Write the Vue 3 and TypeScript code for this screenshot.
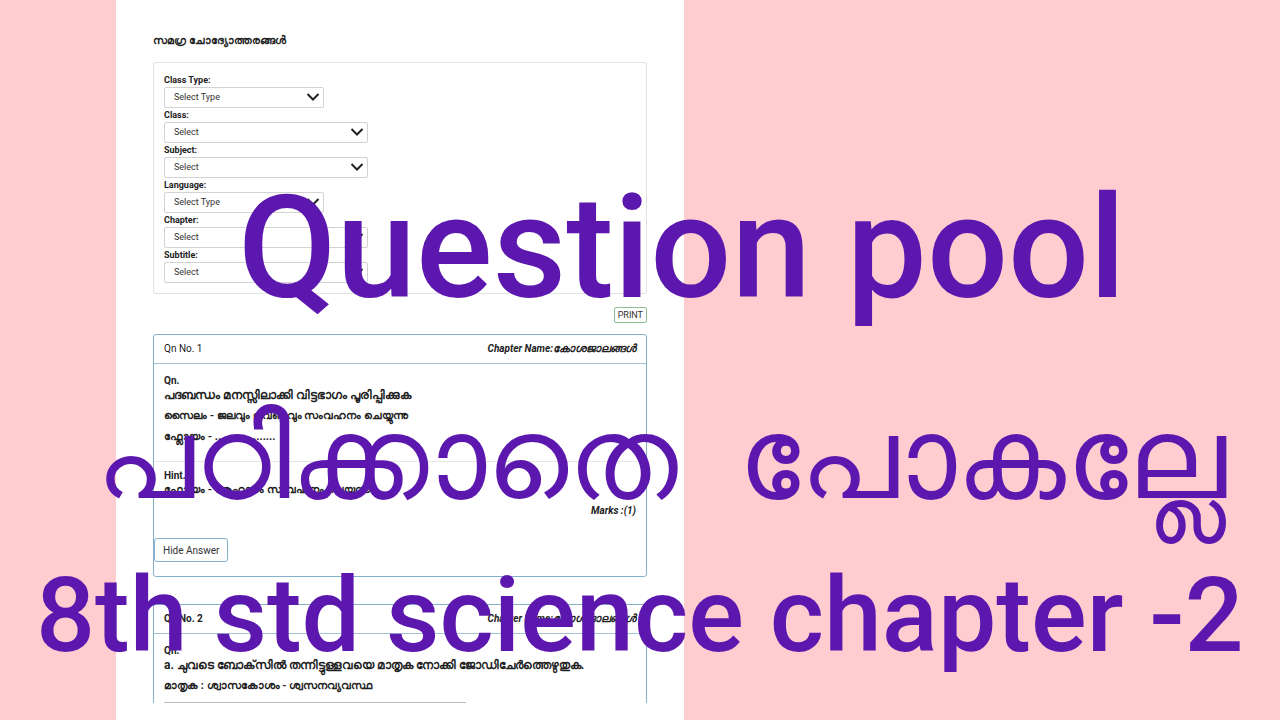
<script setup lang="ts">
interface Field {
  id: string
  label: string
  placeholder: string
  narrow: boolean
}

const fields: Field[] = [
  { id: 'class-type', label: 'Class Type:', placeholder: 'Select Type', narrow: true },
  { id: 'class', label: 'Class:', placeholder: 'Select', narrow: false },
  { id: 'subject', label: 'Subject:', placeholder: 'Select', narrow: false },
  { id: 'language', label: 'Language:', placeholder: 'Select Type', narrow: true },
  { id: 'chapter', label: 'Chapter:', placeholder: 'Select', narrow: false },
  { id: 'subtitle', label: 'Subtitle:', placeholder: 'Select', narrow: false },
]
</script>

<template>
  <main class="poster">
    <section class="sheet">
      <h1 class="title">സമഗ്ര ചോദ്യോത്തരങ്ങൾ</h1>

      <form class="filters">
        <div v-for="f in fields" :key="f.id" class="field">
          <label :for="f.id">{{ f.label }}</label>
          <div class="picker" :class="{ narrow: f.narrow }">
            <select :id="f.id">
              <option>{{ f.placeholder }}</option>
            </select>
            <svg viewBox="0 0 14 8" aria-hidden="true"><path d="M1.500 1 7 6.500 12.500 1" /></svg>
          </div>
        </div>
      </form>

      <div class="tools"><button type="button" class="print">PRINT</button></div>

      <article class="card">
        <header>
          <span>Qn No. 1</span>
          <em>Chapter Name:<span class="ml">കോശജാലങ്ങൾ</span></em>
        </header>
        <div class="question">
          <h2>Qn.</h2>
          <p class="lead">പദബന്ധം മനസ്സിലാക്കി വിട്ടഭാഗം പൂരിപ്പിക്കുക</p>
          <p>സൈലം - ജലവും ലവണവും സംവഹനം ചെയ്യുന്നു</p>
          <p>ഫ്ലോയം - ...................</p>
        </div>
        <div class="hint">
          <h2>Hint.</h2>
          <p>ഫ്ലോയം - ആഹാരം സംവഹനം ചെയ്യുന്നു.</p>
          <em class="marks">Marks :(1)</em>
        </div>
        <button type="button" class="answer">Hide Answer</button>
      </article>

      <article class="card cut">
        <header>
          <strong>Qn No. 2</strong>
          <em>Chapter Name:<span class="ml">കോശജാലങ്ങൾ</span></em>
        </header>
        <div class="question">
          <h2>Qn.</h2>
          <p class="lead">a. ചുവടെ ബോക്&zwnj;സിൽ തന്നിട്ടുള്ളവയെ മാതൃക നോക്കി ജോഡിചേർത്തെഴുതുക.</p>
          <p>മാതൃക : ശ്വാസകോശം - ശ്വസനവ്യവസ്ഥ</p>
          <hr />
        </div>
      </article>
    </section>

    <div class="captions">
      <p class="pool">Question pool</p>
      <p class="call"><span>പഠിക്കാതെ</span><span>പോകല്ലേ</span></p>
      <p class="chapter">8th std science chapter -2</p>
    </div>
  </main>
</template>

<style>
body {
  background: #ffccd0;
}
</style>

<style scoped>
.poster {
  position: relative;
  display: grid;
  grid-template-columns: 116fr 568fr 596fr;
  min-height: 100vh;
  overflow: hidden;
  font-family: Roboto, "Noto Sans", sans-serif;
  font-size: 9px;
  color: #222;
}
.sheet {
  grid-column: 2;
  background: #fff;
  padding: 32px 37px 18px;
}
h1, h2, p {
  margin: 0;
}
.title {
  font-size: 11px;
  line-height: 18px;
}
.filters {
  margin-top: 12px;
  padding: 10px 10px;
  border: 1px solid #e2e2e2;
  border-radius: 2px;
}
.field label {
  display: block;
  font-weight: 700;
  line-height: 14px;
}
.picker {
  position: relative;
  width: 204px;
}
.picker.narrow {
  width: 160px;
}
.picker select {
  display: block;
  width: 100%;
  height: 21px;
  padding: 0 9px 1px;
  border: 1px solid #d2d2d2;
  border-radius: 2px;
  background: #fff;
  color: #333;
  font: inherit;
  appearance: none;
}
.picker svg {
  position: absolute;
  right: 4px;
  top: 6px;
  width: 14px;
  height: 8px;
  fill: none;
  stroke: #222;
  stroke-width: 2;
}
.tools {
  display: flex;
  justify-content: flex-end;
  margin: 13px 0 11px;
}
button {
  background: #fff;
  color: #333;
  font: inherit;
}
.print {
  height: 16px;
  padding: 0 3px;
  border: 1px solid #8fc093;
  border-radius: 2px;
}
.card {
  height: 243px;
  box-sizing: border-box;
  border: 1px solid #84b0cc;
  border-radius: 3px;
}
.card header {
  display: flex;
  justify-content: space-between;
  padding: 0 10px;
  border-bottom: 1px solid #a5c3d6;
  font-size: 10px;
  line-height: 28px;
}
.card em {
  font-weight: 700;
}
.ml {
  font-size: 11px;
}
.question {
  padding: 10px 10px 17px;
}
h2 {
  font-size: 10px;
  line-height: 14px;
}
.card p {
  font-size: 11px;
  font-weight: 700;
  line-height: 14px;
}
.card .lead {
  font-size: 12px;
}
.question p + p {
  margin-top: 7px;
}
.hint {
  display: flex;
  flex-direction: column;
  padding: 7px 10px 0;
  border-top: 1px solid #e6e6e6;
}
.marks {
  align-self: flex-end;
  margin-top: 7px;
  font-size: 10px;
  line-height: 14px;
}
.answer {
  display: block;
  height: 24px;
  margin-top: 20px;
  padding: 0 8px;
  border: 1px solid #84b0cc;
  border-radius: 3px;
  font-size: 10px;
}
.card.cut {
  height: auto;
  margin-top: 27px;
  border-bottom: 0;
  border-radius: 3px 3px 0 0;
}
.cut .question {
  padding-bottom: 0;
}
hr {
  width: 64%;
  margin: 9px 0 0;
  border: 0;
  border-top: 1px solid #bbb;
}
.captions {
  position: absolute;
  inset: 0;
  color: #5b17ae;
  font-weight: 500;
  white-space: nowrap;
  pointer-events: none;
}
.pool {
  padding: 163px 0 0 238px;
  font-size: 143px;
  line-height: 170px;
}
.call {
  display: flex;
  gap: 60px;
  padding: 51px 0 0 96px;
  font-size: 115px;
  font-weight: 550;
  line-height: 150px;
}
.chapter {
  padding: 21px 0 0 36px;
  font-size: 104px;
  line-height: 122px;
}
</style>
